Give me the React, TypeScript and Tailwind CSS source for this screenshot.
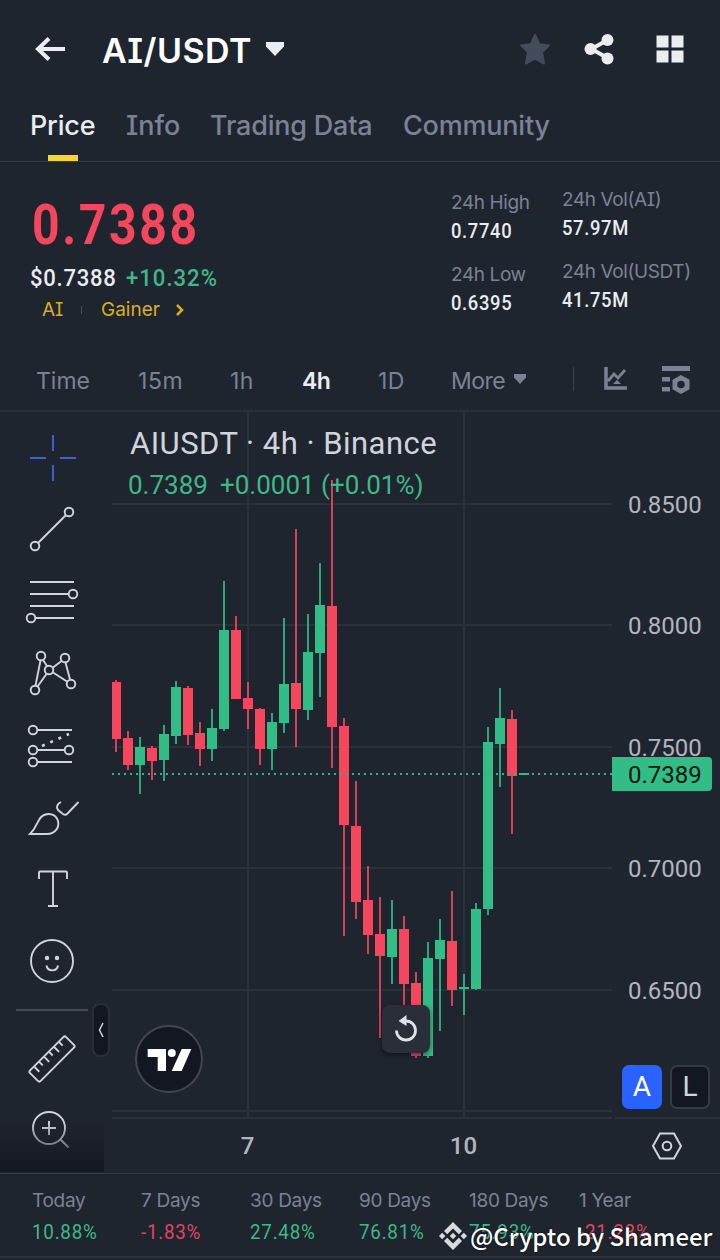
import React from "react";

type Candle = [top: number, bottom: number, high: number, low: number, up: 0 | 1];

// body top, body bottom, wick top, wick bottom (chart pixels), rising
const candles: Candle[] = [
  [272, 329, 270, 342, 0],
  [328, 355, 321, 360, 0],
  [337, 355, 327, 384, 1],
  [338, 351, 336, 370, 0],
  [324, 350, 315, 371, 1],
  [277, 326, 271, 334, 1],
  [278, 325, 276, 335, 0],
  [323, 339, 312, 356, 0],
  [318, 339, 299, 351, 1],
  [220, 319, 171, 321, 1],
  [220, 289, 206, 289, 0],
  [288, 299, 272, 319, 0],
  [299, 339, 298, 355, 0],
  [312, 339, 303, 360, 1],
  [274, 313, 208, 323, 1],
  [273, 299, 119, 337, 0],
  [242, 300, 204, 310, 1],
  [195, 243, 153, 287, 1],
  [196, 317, 70, 358, 0],
  [316, 415, 308, 526, 0],
  [416, 492, 371, 509, 0],
  [490, 525, 456, 544, 0],
  [524, 546, 487, 628, 0],
  [519, 547, 490, 574, 1],
  [519, 574, 506, 610, 0],
  [573, 646, 562, 648, 0],
  [548, 646, 532, 648, 1],
  [530, 549, 509, 621, 1],
  [531, 580, 481, 596, 0],
  [577, 579, 564, 605, 1],
  [499, 579, 493, 580, 1],
  [332, 499, 317, 505, 1],
  [308, 334, 278, 377, 1],
  [309, 366, 300, 424, 0],
  [363, 365, 363, 365, 1],
];

const gridLines = [
  { y: 94, label: "0.8500" },
  { y: 215, label: "0.8000" },
  { y: 337, label: "0.7500" },
  { y: 458, label: "0.7000" },
  { y: 580, label: "0.6500" },
];

const periods = [
  { label: "Today", value: "10.88%", up: true, width: "w-[109px]" },
  { label: "7 Days", value: "-1.83%", up: false, width: "w-[109px]" },
  { label: "30 Days", value: "27.48%", up: true, width: "w-[109px]" },
  { label: "90 Days", value: "76.81%", up: true, width: "w-[110px]" },
  { label: "180 Days", value: "75.93%", up: true, width: "w-[110px]" },
  { label: "1 Year", value: "-21.28%", up: false, width: "w-[100px]" },
];

const SANS = "font-['Inter',sans-serif] [font-feature-settings:'cv08'_1]";
const DIN = "font-['Roboto',sans-serif]";

function Header() {
  return (
    <header className="flex h-[98px] items-center pl-[34px] pr-[36px]">
      <svg width="32" height="26" viewBox="0 0 32 26" fill="none" stroke="#eaecef" strokeWidth="4">
        <path d="M31 13H4M15 2.5L4 13l11 10.5" />
      </svg>
      <h1 className="ml-[36px] mt-[3px] w-[150px] whitespace-nowrap text-[34px] font-semibold leading-[40px] tracking-[0.5px] text-white">
        AI/USDT
      </h1>
      <svg className="ml-[13px]" width="20" height="16" viewBox="0 0 20 16" fill="#eaecef">
        <path d="M1 1h18v4.5L10 15 1 5.5z" />
      </svg>
      <div className="ml-auto flex items-center">
        <svg width="32" height="32" viewBox="0 0 32 32" fill="#434c5a" stroke="#434c5a" strokeWidth="2" strokeLinejoin="round">
          <path d="M16 2l4.300 9.200 9.700 1.200-7 6.800 2.100 11.300L16 25.600l-9.100 4.900L9 19.200l-7-6.800 9.700-1.200z" />
        </svg>
        <svg className="ml-[33px]" width="32" height="32" viewBox="0 0 32 32" fill="#eaecef" stroke="#eaecef">
          <path d="M23.500 7L7.500 16l16 9" fill="none" strokeWidth="4" />
          <circle cx="6.500" cy="16" r="6" stroke="none" />
          <circle cx="23.500" cy="7" r="6" stroke="none" />
          <circle cx="23.500" cy="25.500" r="6" stroke="none" />
        </svg>
        <svg className="ml-[40px]" width="28" height="28" viewBox="0 0 28 28" fill="#eaecef">
          <path d="M.5.5h12v12H.5zM15.500.5h12v12h-12zM.5 15.500h12v12H.5zM15.500 15.500h12v12h-12z" />
        </svg>
      </div>
    </header>
  );
}

function Tabs() {
  return (
    <nav className="flex h-[64px] whitespace-nowrap border-b border-[#333b47] pl-[30px] pt-[11px] text-[27px] font-medium leading-[34px] text-[#7b8294]">
      <div className="relative w-[96px] text-[#eaecef]">
        <span className="tracking-[-0.2px]">Price</span>
        <span className="absolute left-[18px] top-[46px] h-[6px] w-[30px] bg-[#f8d33a]" />
      </div>
      <span className="w-[84px]">Info</span>
      <span className="w-[193px] tracking-[-0.2px]">Trading Data</span>
      <span className="tracking-[-0.2px]">Community</span>
    </nav>
  );
}

function Stat({ label, value }: { label: string; value: string }) {
  return (
    <div className="h-[72px] whitespace-nowrap">
      <div className="text-[19px] leading-[26px] tracking-[-0.4px] text-[#7b8294]">{label}</div>
      <div
        className={`${DIN} origin-left scale-x-[0.92] text-[20px] font-medium leading-[30px] tracking-[0.7px] text-[#eaecef]`}
      >
        {value}
      </div>
    </div>
  );
}

function PriceInfo() {
  return (
    <section className="flex h-[188px]">
      <div className="w-[451px] pl-[30px] pt-[30px]">
        <div
          className={`${DIN} ml-[2px] origin-left scale-x-[0.86] text-[56px] font-bold leading-[66px] tracking-[3px] text-[#f6465d]`}
        >
          0.7388
        </div>
        <div className={`${DIN} -mt-px mb-px flex text-[24px] font-medium leading-[42px]`}>
          <span className="w-[96px] origin-left scale-x-[0.92] tracking-[0.8px] text-[#eaecef]">$0.7388</span>
          <span className="origin-left scale-x-[0.92] tracking-[1.100px] text-[#3fb787]">+10.32%</span>
        </div>
        <div className="flex items-center pl-[12px] text-[19px] leading-[20px] text-[#d9ae22]">
          <span className="w-[39px]">AI</span>
          <span className="h-[8px] w-px bg-[#474d57]" />
          <span className="ml-[19px] w-[75px]">Gainer</span>
          <svg width="8" height="12" viewBox="0 0 8 12" fill="none" stroke="currentColor" strokeWidth="2.500">
            <path d="M1 1l5 5-5 5" />
          </svg>
        </div>
      </div>
      <div className="w-[111px] pt-[28px]">
        <Stat label="24h High" value="0.7740" />
        <Stat label="24h Low" value="0.6395" />
      </div>
      <div className="pt-[25px]">
        <Stat label="24h Vol(AI)" value="57.97M" />
        <Stat label="24h Vol(USDT)" value="41.75M" />
      </div>
    </section>
  );
}

function Intervals() {
  return (
    <section className="flex h-[60px] items-center whitespace-nowrap pl-[36px] pt-[2px] text-[23px] leading-[30px] text-[#7b8294]">
      <span className="w-[102px]">Time</span>
      <span className="w-[92px] tracking-[0.6px]">15m</span>
      <span className="w-[72px] tracking-[0.4px]">1h</span>
      <span className="w-[76px] font-semibold tracking-[-0.6px] text-[#eaecef]">4h</span>
      <span className="w-[73px] tracking-[0.4px]">1D</span>
      <span className="w-[62px] tracking-[-0.5px]">More</span>
      <svg className="mb-[4px]" width="14" height="12" viewBox="0 0 14 12" fill="#7b8294">
        <path d="M1 1h12v3.500L7 11 1 4.500z" />
      </svg>
      <span className="mb-[4px] ml-[46px] h-[24px] w-px bg-[#3a424e]" />
      <svg className="mb-[4px] ml-[30px]" width="24" height="24" viewBox="0 0 24 24" fill="none" stroke="#7b8294" strokeWidth="3.500">
        <path d="M2 0v21h21" />
        <path d="M4 14l6-7 4 4 7-8" strokeWidth="2.800" />
        <path d="M9 17l4-4 4 4z" fill="#7b8294" stroke="none" />
      </svg>
      <svg className="mb-[2px] ml-[33px]" width="30" height="30" viewBox="0 0 30 30" fill="#7b8294">
        <path d="M1 1h28v5H1zM1 12h8v4.500H1zM1 22h8v4.500H1z" />
        <path fillRule="evenodd" d="M20 10l8.500 4.800v9.400L20 29l-8.500-4.800v-9.400zM20 15.700a3.800 3.800 0 100 7.600 3.800 3.800 0 000-7.600z" />
      </svg>
    </section>
  );
}

function Toolbar() {
  return (
    <aside className="relative h-[762px] w-[112px] shrink-0">
      <svg width="112" height="762" viewBox="0 410 112 762" fill="none" stroke="#d1d4dc" strokeWidth="1.900">
        <path d="M53 435v16M53 465v16M30 458h16M60 458h16" stroke="#3a62d8" />

        <circle cx="35" cy="546" r="4.300" />
        <circle cx="69" cy="512" r="4.300" />
        <path d="M38 543l28-28" />

        <path d="M30 582h44M30 594h38M30 606h44M36 618h38" />
        <circle cx="73" cy="594" r="4.300" />
        <circle cx="31" cy="618" r="4.300" />

        <circle cx="41" cy="656" r="4.300" />
        <circle cx="65" cy="658" r="4.300" />
        <circle cx="49" cy="670" r="4.300" />
        <circle cx="71" cy="684" r="4.300" />
        <circle cx="35" cy="690" r="4.300" />
        <path d="M40.500 660.500L35.500 685.500M43 660l4 6M53 667.500l8.500-6.500M65.500 662.500l4.500 17M53 672.500l14 9M46.500 674l-9 12.500" />

        <circle cx="33" cy="730" r="4.300" />
        <circle cx="33" cy="750" r="4.300" />
        <circle cx="33" cy="762" r="4.300" />
        <circle cx="69" cy="750" r="4.300" />
        <path d="M37.500 730H72M37.500 750h27M37.500 762H72" />
        <path d="M42 746l27-12" strokeWidth="2.600" strokeDasharray="3 6" />

        <path d="M30 834c6-6 7-11 9-14 4-8 15-8 18.500-.5C60.500 827 55 834 47 834zM61 802c-4 2-5 5-3 8l5 4c1.500 1 3 1 4.500-.5L78.500 802" />

        <path d="M39 879v-6.500q0-1 1-1h26q1 0 1 1v6.500M53 872v34M48 906h10" />

        <circle cx="52" cy="961" r="21" />
        <path d="M46.500 965.500c1 6.500 10.500 6.500 11.500 0" />
        <circle cx="47" cy="958" r="2.200" fill="#d1d4dc" stroke="none" />
        <circle cx="57" cy="958" r="2.200" fill="#d1d4dc" stroke="none" />

        <path d="M16 1010h72" stroke="#434956" />

        <g transform="rotate(-45 52 1059)">
          <rect x="26.500" y="1051.500" width="51" height="15" rx="2" />
          <path d="M34 1052v7M41 1052v5M48 1052v7M55 1052v5M62 1052v7M69 1052v5" />
        </g>

        <circle cx="49" cy="1128" r="16" />
        <path d="M42 1128h14M49 1121v14M60.500 1139.500l8 8" />
      </svg>
      <div className="absolute bottom-0 left-0 h-[50px] w-[104px] bg-linear-to-b from-[#131722]/0 to-[#131722]" />
      <div className="absolute left-[92px] top-[593px] flex h-[54px] w-[18px] items-center justify-center rounded-[8px] border-2 border-[#2a2e39] bg-[#131722]">
        <svg width="6" height="16" viewBox="0 0 6 16" fill="none" stroke="#d1d4dc" strokeWidth="1.500">
          <path d="M5 1L1.500 8 5 15" />
        </svg>
      </div>
    </aside>
  );
}

function Chart() {
  return (
    <div className="relative h-[762px] w-[608px]">
      <svg className="font-['Roboto',sans-serif]" width="608" height="762" viewBox="112 0 608 762">
        <g stroke="#2a313b" strokeWidth="2">
          {gridLines.map((g) => (
            <path key={g.label} d={`M112 ${g.y}H612`} />
          ))}
          <path d="M112 701H612M112 708H612M615 708H720M248 0V708M464 0V708" />
        </g>
        <g fontSize="24" fill="#b2b5be">
          {gridLines.map((g) => (
            <text key={g.label} x="628" y={g.y + 9}>
              {g.label}
            </text>
          ))}
        </g>
        {candles.map(([top, bottom, high, low, up], i) => {
          const x = 116 + i * 12;
          const left = i === 0 ? 112 : x - 5;
          return (
            <g key={i} fill={up ? "#32bd87" : "#f6465d"}>
              <rect x={x - 1} y={high} width="2" height={low - high} opacity="0.85" />
              <rect x={left} y={top} width={x + 5 - left} height={bottom - top} />
            </g>
          );
        })}
        <path d="M112 364H612" stroke="#3fae84" strokeWidth="2" strokeDasharray="2 4" />
        <path d="M612 347h96q4 0 4 4v26q0 4-4 4h-96z" fill="#32bd87" />
        <text x="628" y="373" fontSize="24" fill="#06150f">
          0.7389
        </text>
        <text x="130" y="44" fontSize="31" letterSpacing="0.480" fill="#d1d4dc">
          AIUSDT · 4h · Binance
        </text>
        <g fontSize="26" fill="#3fb787">
          <text x="128" y="84">0.7389</text>
          <text x="220" y="84">+0.0001 (+0.01%)</text>
        </g>
        <g fontSize="24" fontWeight="500" fill="#b2b5be" textAnchor="middle">
          <text x="247.500" y="744">7</text>
          <text x="463.500" y="744">10</text>
        </g>
        <circle cx="169" cy="649" r="33" fill="#131722" stroke="#434651" strokeWidth="2" />
        <g fill="#fff">
          <path d="M147.700 639H166v22h-8.300v-14h-10zM181.700 639h9.600l-9.600 22h-10z" />
          <circle cx="171.800" cy="643" r="4" />
        </g>
        <g fill="none" stroke="#d1d4dc" strokeWidth="2">
          <path d="M660 723.500h14l7 12.500-7 12.500h-14l-7-12.500z" />
          <circle cx="667" cy="736" r="4.300" />
        </g>
      </svg>
      <button className="absolute left-[270px] top-[595px] flex size-[48px] items-center justify-center rounded-[8px] bg-[#2a2e39] shadow-[0_2px_5px_rgba(0,0,0,0.5)]">
        <svg width="26" height="28" viewBox="0 0 26 28" fill="none" stroke="#dfe2ea" strokeWidth="2.800">
          <path d="M3.500 15.500a9.500 9.500 0 1 0 9.500-9.500h-2" />
          <path d="M13.500 0v11L5.500 6z" fill="#dfe2ea" stroke="none" />
        </svg>
      </button>
      <div className={`${DIN} absolute left-[510px] top-[655px] flex gap-2 text-[28px] leading-[42px]`}>
        <button className="h-[44px] w-[40px] rounded-[7px] bg-[#2962ff] text-white">A</button>
        <button className="h-[44px] w-[40px] rounded-[7px] border-2 border-[#363a45] bg-[#131722] leading-[38px] text-[#d1d4dc]">
          L
        </button>
      </div>
    </div>
  );
}

function Performance() {
  return (
    <footer className="flex h-[87px] whitespace-nowrap border-t border-[#333b47] pl-[32px] pt-[14px]">
      {periods.map((p) => (
        <div key={p.label} className={`${p.width} shrink-0`}>
          <div className="text-[19px] leading-[26px] tracking-[-0.3px] text-[#7b8294]">{p.label}</div>
          <div
            className={`${DIN} origin-left scale-x-[0.94] pt-[3px] text-[20px] leading-[30px] tracking-[0.8px] ${p.up ? "text-[#3fb787]" : "text-[#dd4760]"}`}
          >
            {p.value}
          </div>
        </div>
      ))}
    </footer>
  );
}

function Watermark() {
  return (
    <div className="absolute left-[439px] top-[1218px] flex items-center whitespace-nowrap font-['Noto_Sans_CJK_SC',sans-serif] text-[24px] font-medium leading-[36px] text-white [text-shadow:0_0_2px_#000]">
      <svg width="28" height="28" viewBox="0 0 28 28" fill="#d8dadd">
        <path d="M14 0l9 9-3.200 3.200L14 6.400l-5.800 5.800L5 9zM14 28l9-9-3.200-3.200L14 21.600l-5.800-5.800L5 19zM14 10.800l3.200 3.200-3.200 3.200-3.200-3.200zM3.200 10.800L6.400 14l-3.200 3.200L0 14zM24.800 10.800L28 14l-3.200 3.200-3.200-3.200z" />
      </svg>
      <span className="ml-[3px]">@Crypto by Shameer</span>
    </div>
  );
}

export default function App() {
  return (
    <main className={`${SANS} relative h-[1260px] w-[720px] overflow-hidden bg-[#1f252f]`}>
      <Header />
      <Tabs />
      <PriceInfo />
      <Intervals />
      <div className="relative flex h-[763px]">
        <Toolbar />
        <Chart />
        <div className="absolute left-0 top-0 h-[2px] w-full bg-[#282f3a]" />
      </div>
      <Performance />
      <div className="absolute bottom-[2px] left-0 h-[2px] w-full bg-[#2a323e]" />
      <Watermark />
    </main>
  );
}
